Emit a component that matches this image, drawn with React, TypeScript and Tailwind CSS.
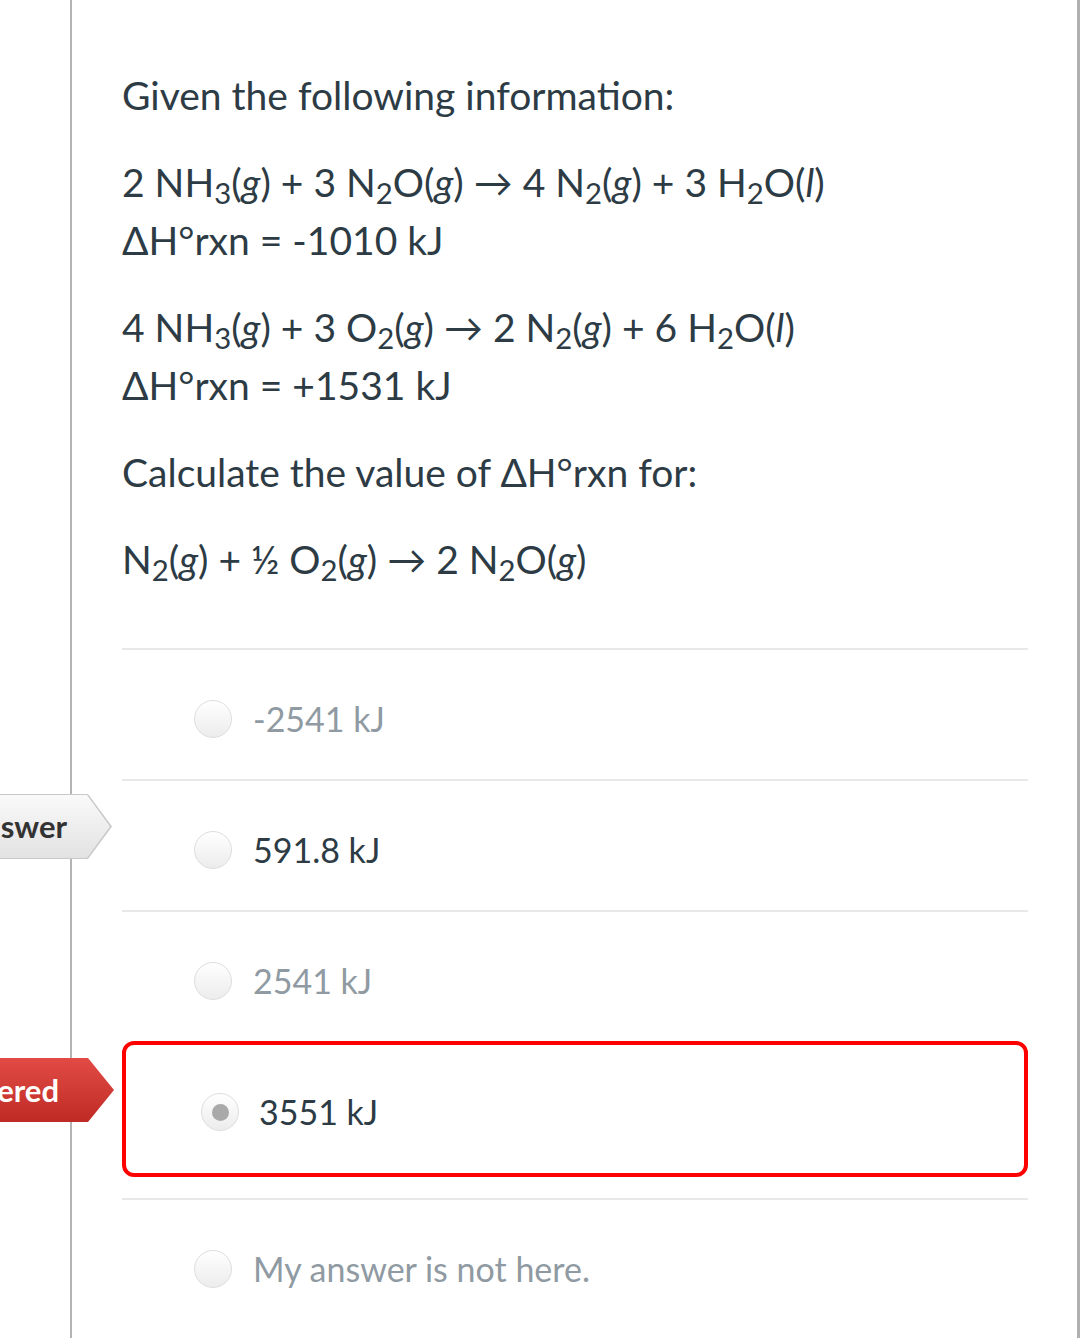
import React from 'react'

const g = <i>g</i>

function Radio({ checked }: { checked?: boolean }) {
  return (
    <span className="flex h-[38px] w-[38px] shrink-0 items-center justify-center rounded-full border border-[#dedede] bg-gradient-to-b from-white to-[#ececec]">
      {checked && <span className="h-[17px] w-[17px] rounded-full bg-[#a9a9a9]" />}
    </span>
  )
}

function Option({ label, faded }: { label: string; faded?: boolean }) {
  return (
    <div className="flex h-[131px] items-start border-t-2 border-[#e8e8e8] pl-[72px] pt-[50px]">
      <Radio />
      <span className={`ml-[21px] text-[34px] leading-[38px] ${faded ? 'text-[#8f9aa2]' : 'text-[#2d3b45]'}`}>{label}</span>
    </div>
  )
}

export default function App() {
  return (
    <div className="relative flex min-h-[1338px] bg-white font-['Lato',sans-serif] text-[#2d3b45]">
      {/* left gutter */}
      <div className="w-[72px] shrink-0 border-r-2 border-[#b4b4b4]" />

      {/* correct answer tag */}
      <div className="absolute left-0 top-[794px] h-[65px] w-[112px] bg-[#c9c9c9] [clip-path:polygon(0_0,88px_0,112px_50%,88px_100%,0_100%)]">
        <div className="absolute inset-[1px] left-0 flex items-center justify-end bg-gradient-to-b from-[#fafafa] to-[#e2e2e2] pr-[44px] [clip-path:polygon(0_0,87px_0,110px_50%,87px_100%,0_100%)]">
          <span className="whitespace-nowrap text-[31px] font-bold text-[#333]">Correct Answer</span>
        </div>
      </div>

      {/* you answered tag */}
      <div className="absolute left-0 top-[1058px] flex h-[64px] w-[114px] items-center justify-end bg-gradient-to-b from-[#e24b45] to-[#bf2a24] pr-[55px] [clip-path:polygon(0_0,88px_0,114px_50%,88px_100%,0_100%)]">
        <span className="whitespace-nowrap text-[31px] font-bold text-white">You Answered</span>
      </div>

      <div className="flex-1 border-r-[3px] border-[#b0b0b0] pl-[50px] pr-[49px] pt-[66px]">
        <div className="text-[39px] leading-[58px]">
          <p className="mb-[29px]">Given the following information:</p>
          <p className="mb-[29px]">
            2 NH<sub>3</sub>({g}) + 3 N<sub>2</sub>O({g}) → 4 N<sub>2</sub>({g}) + 3 H<sub>2</sub>O(<i>l</i>)
            <br />
            ΔH°rxn = -1010 kJ
          </p>
          <p className="mb-[29px]">
            4 NH<sub>3</sub>({g}) + 3 O<sub>2</sub>({g}) → 2 N<sub>2</sub>({g}) + 6 H<sub>2</sub>O(<i>l</i>)
            <br />
            ΔH°rxn = +1531 kJ
          </p>
          <p className="mb-[29px]">Calculate the value of ΔH°rxn for:</p>
          <p>
            N<sub>2</sub>({g}) + ½ O<sub>2</sub>({g}) → 2 N<sub>2</sub>O({g})
          </p>
        </div>

        <div className="mt-[60px]">
          <Option label="-2541 kJ" faded />
          <Option label="591.8 kJ" />
          <Option label="2541 kJ" faded />
          <div className="flex h-[136px] items-start rounded-[12px] border-4 border-[#ff0000] pl-[75px] pt-[48px]">
            <Radio checked />
            <span className="ml-[20px] text-[34px] leading-[38px] text-[#2d3b45]">3551 kJ</span>
          </div>
          <div className="mt-[21px]">
            <Option label="My answer is not here." faded />
          </div>
        </div>
      </div>
    </div>
  )
}
